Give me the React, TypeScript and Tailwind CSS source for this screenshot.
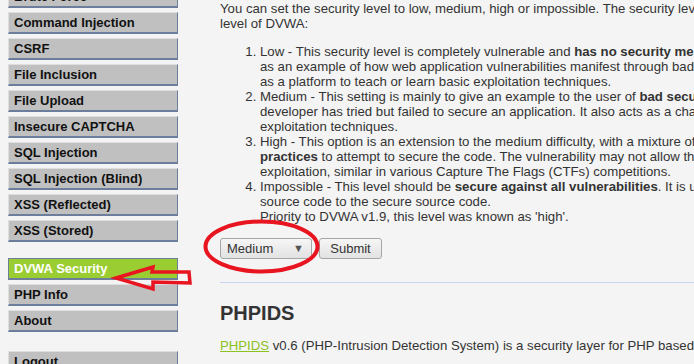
import React from "react";

const topMenu = [
  "Brute Force",
  "Command Injection",
  "CSRF",
  "File Inclusion",
  "File Upload",
  "Insecure CAPTCHA",
  "SQL Injection",
  "SQL Injection (Blind)",
  "XSS (Reflected)",
  "XSS (Stored)",
];

function MenuItem({ label, active }: { label: string; active?: boolean }) {
  return (
    <li
      className={
        active
          ? "mb-[4px] h-[22px] border border-b-2 border-[#6d7e9c] bg-[#9acd32] pl-[5px] text-[13px] leading-[19px] font-bold text-white"
          : "mb-[4px] h-[22px] border border-b-2 border-t-[#dedede] border-l-[#dedede] border-r-[#6d7e9c] border-b-[#6d7e9c] bg-[#c0c0c0] pl-[5px] text-[13px] leading-[19px] font-bold text-[#111]"
      }
    >
      {label}
    </li>
  );
}

export default function App() {
  return (
    <div
      className="relative h-[364px] w-[694px] overflow-hidden bg-[#f4f4f4] text-[#333]"
      style={{ fontFamily: '"Liberation Sans", Arial, sans-serif' }}
    >
      <div className="flex">
        {/* sidebar */}
        <div className="w-[178px] shrink-0 pl-[8px]">
          <ul className="-mt-[14px]">
            {topMenu.map((m) => (
              <MenuItem key={m} label={m} />
            ))}
          </ul>
          <ul className="mt-[16px]">
            <MenuItem label="DVWA Security" active />
            <MenuItem label="PHP Info" />
            <MenuItem label="About" />
          </ul>
          <ul className="mt-[19px]">
            <MenuItem label="Logout" />
          </ul>
        </div>

        {/* main */}
        <div className="ml-[42px] shrink-0 whitespace-nowrap pt-[1px] text-[13.2px] leading-[15px]">
          <p>
            You can set the security level to low, medium, high or impossible. The security level changes the vulnerability
            <br />
            level of DVWA:
          </p>
          <ol className="mt-[13px] list-decimal pl-[40px]">
            <li>
              Low - This security level is completely vulnerable and <b>has no security measures at all</b>. It's use is to be
              <br />
              as an example of how web application vulnerabilities manifest through bad coding practices and to serve
              <br />
              as a platform to teach or learn basic exploitation techniques.
            </li>
            <li>
              Medium - This setting is mainly to give an example to the user of <b>bad security practices</b>, where the
              <br />
              developer has tried but failed to secure an application. It also acts as a challenge to users to refine their
              <br />
              exploitation techniques.
            </li>
            <li>
              High - This option is an extension to the medium difficulty, with a mixture of <b>harder or alternative bad</b>
              <br />
              <b>practices</b> to attempt to secure the code. The vulnerability may not allow the same extent of the
              <br />
              exploitation, similar in various Capture The Flags (CTFs) competitions.
            </li>
            <li>
              Impossible - This level should be <b>secure against all vulnerabilities</b>. It is used to compare the vulnerable
              <br />
              source code to the secure source code.
              <br />
              Priority to DVWA v1.9, this level was known as 'high'.
            </li>
          </ol>

          <div className="mt-[14px] flex gap-[7px]">
            <div className="flex h-[21px] w-[92px] items-center justify-between rounded-[3px] border border-[#a6a6a6] bg-gradient-to-b from-[#f6f6f6] to-[#e2e2e2] pl-[6px] pr-[7px] text-[13px] text-[#333]">
              <span>Medium</span>
              <span className="text-[11px] text-[#555]">▼</span>
            </div>
            <div className="flex h-[21px] w-[63px] items-center justify-center rounded-[3px] border border-[#a6a6a6] bg-gradient-to-b from-[#f6f6f6] to-[#e2e2e2] text-[13px] text-[#333]">
              Submit
            </div>
          </div>

          <div className="mt-[23px] h-px w-[480px] bg-[#c9d3f2]" />

          <h2 className="mt-[18px] text-[20px] leading-[24px] font-bold text-[#333]">PHPIDS</h2>

          <p className="mt-[13px]">
            <span className="text-[#8cc21f] underline">PHPIDS</span> v0.6 (PHP-Intrusion Detection System) is a security layer for PHP based web applications.
          </p>
        </div>
      </div>

      {/* red annotations */}
      <svg className="pointer-events-none absolute left-0 top-0" width="694" height="364">
        <ellipse cx="261.5" cy="246.5" rx="56" ry="25" fill="none" stroke="#e8141f" strokeWidth="4" />
        <polygon
          points="116,278 153,267 152,272 189,272 190,283 153,282 153,289"
          fill="none"
          stroke="#e8141f"
          strokeWidth="3.5"
          strokeLinejoin="miter"
        />
      </svg>
    </div>
  );
}
